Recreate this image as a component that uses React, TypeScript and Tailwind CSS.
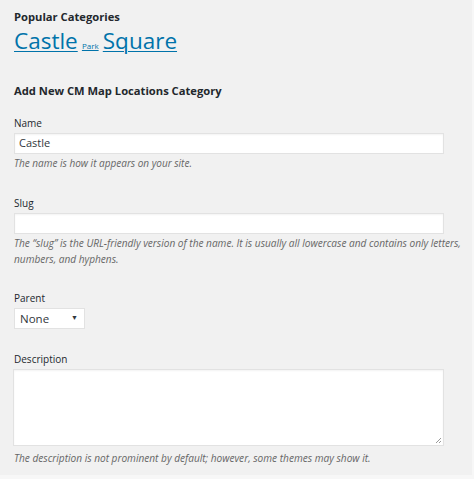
import React from "react";

export default function App() {
  const font = { fontFamily: '"Open Sans", "Noto Sans", sans-serif' };
  return (
    <div className="w-[474px] h-[479px] bg-[#f7f7f7]" style={font}>
      <div className="w-[472px] h-[475px] bg-[#f1f1f1] pl-[14px] pr-[28px] pt-[8px] text-[#23282d]">
        <div className="text-[11.2px] font-bold leading-[18px]">Popular Categories</div>
        <div className="mt-[0px] h-[30px] leading-[30px] whitespace-nowrap">
          <a className="text-[22.5px] text-[#0073aa] underline decoration-1 underline-offset-2">Castle</a>{" "}
          <a className="text-[8px] text-[#0073aa] underline">Park</a>{" "}
          <a className="text-[22.5px] text-[#0073aa] underline decoration-1 underline-offset-2">Square</a>
        </div>
        <div className="mt-[26px] text-[11.2px] font-bold leading-[18px]">Add New CM Map Locations Category</div>

        <div className="mt-[15px] text-[10px] leading-[16px] text-[#23282d]">Name</div>
        <div className="mt-[2px] h-[21px] w-[430px] bg-white border border-[#e2e2e2] shadow-[inset_0_1px_2px_rgba(0,0,0,0.05)] flex items-center px-[4px] text-[11px] text-[#32373c]">
          Castle
        </div>
        <div className="mt-[1px] text-[10px] italic leading-[16px] text-[#666]">The name is how it appears on your site.</div>

        <div className="mt-[24px] text-[10px] leading-[16px]">Slug</div>
        <div className="mt-[2px] h-[21px] w-[430px] bg-white border border-[#e2e2e2] shadow-[inset_0_1px_2px_rgba(0,0,0,0.05)]" />
        <div className="mt-[1px] text-[10.1px] italic leading-[16px] text-[#666] w-[460px]">
          The “slug” is the URL-friendly version of the name. It is usually all lowercase and contains only letters,
          <br />
          numbers, and hyphens.
        </div>

        <div className="mt-[23px] text-[10px] leading-[16px]">Parent</div>
        <div className="mt-[2px] h-[21px] w-[71px] bg-white border border-[#e2e2e2] flex items-center justify-between pl-[5px] pr-[6px] text-[11.5px] text-[#32373c]">
          <span>None</span>
          <span className="text-[7px]">▼</span>
        </div>

        <div className="mt-[22px] text-[10px] leading-[16px]">Description</div>
        <div className="relative mt-[2px] h-[77px] w-[431px] -ml-[1px] bg-white border border-[#e2e2e2] shadow-[inset_0_1px_2px_rgba(0,0,0,0.05)]">
          <svg className="absolute right-[1px] bottom-[1px]" width="8" height="8" viewBox="0 0 8 8">
            <path d="M7 2 L2 7 M7 5 L5 7" stroke="#999" strokeWidth="1" />
          </svg>
        </div>
        <div className="mt-[4px] text-[10.1px] italic leading-[16px] text-[#666]">
          The description is not prominent by default; however, some themes may show it.
        </div>
      </div>
    </div>
  );
}
